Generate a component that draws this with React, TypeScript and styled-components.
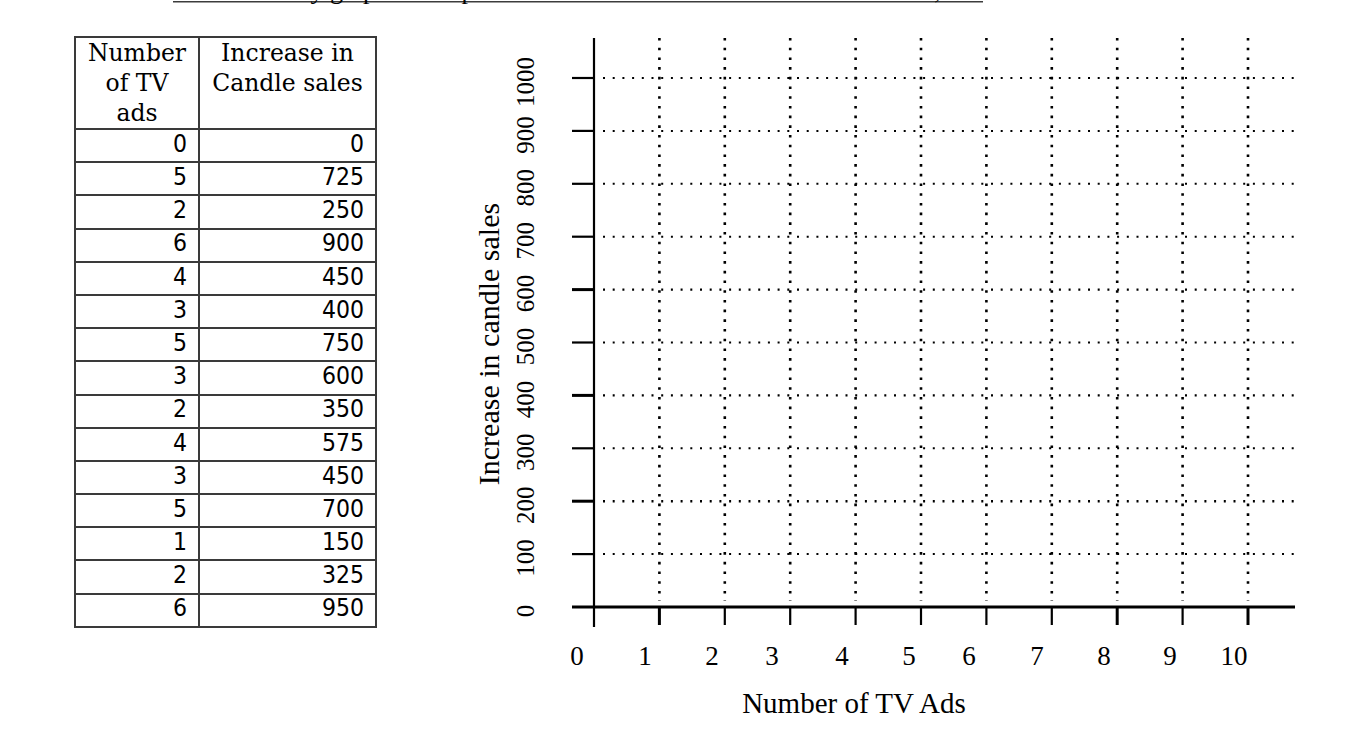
import React from "react";
import styled, { createGlobalStyle } from "styled-components";

const GlobalStyle = createGlobalStyle`
  html, body { margin: 0; padding: 0; background: #ffffff; }
  body { font-family: "Liberation Serif", "Times New Roman", serif; color: #000; }
`;

const Page = styled.div`
  width: 1345px;
  height: 730px;
  overflow: hidden;
  box-sizing: border-box;
  padding-left: 74px;
  display: flex;
  flex-direction: column;
`;

const Prompt = styled.div`
  margin-left: 99px;
  width: 810px;
  height: 6px;
  overflow: hidden;
  background: linear-gradient(#3c3c3c, #3c3c3c) 0 1px / 100% 1.5px no-repeat;
`;

const PromptText = styled.p`
  margin: -22px 0 0;
  font: 26px/26px "Liberation Serif", serif;
  white-space: nowrap;
  text-indent: -181px;
`;

const Content = styled.div`
  display: flex;
  align-items: flex-start;
  gap: 90px;
  margin-top: 30px;
`;

const DataTable = styled.table`
  border-collapse: collapse;
  table-layout: fixed;
  width: 301px;
  flex: none;
`;

const HeadCell = styled.th<{ $w: number }>`
  width: ${(p) => p.$w}px;
  height: 92px;
  box-sizing: border-box;
  border: 2px solid #3a3a3a;
  padding: 0 2px;
  font: 400 23.5px/30px "DejaVu Serif", serif;
  text-align: center;
  vertical-align: top;
`;

const Row = styled.tr`
  height: 33.2px;
`;

const Cell = styled.td`
  border: 2px solid #3a3a3a;
  padding: 0 11px 3px 0;
  font: 400 24.5px/1 "DejaVu Sans Condensed", "Open Sans", sans-serif;
  text-align: right;
  vertical-align: middle;
`;

const ChartSvg = styled.svg`
  display: block;
  flex: none;
  overflow: visible;
`;

const TickLabel = styled.text<{ $size: number }>`
  font-family: "Liberation Serif", serif;
  font-size: ${(p) => p.$size}px;
  fill: #000;
`;

const rows: [number, number][] = [
  [0, 0],
  [5, 725],
  [2, 250],
  [6, 900],
  [4, 450],
  [3, 400],
  [5, 750],
  [3, 600],
  [2, 350],
  [4, 575],
  [3, 450],
  [5, 700],
  [1, 150],
  [2, 325],
  [6, 950],
];

const X0 = 592;
const XSTEP = 65.4;
const Y0 = 607;
const YSTEP = 52.9;
const xs = Array.from({ length: 11 }, (_, i) => X0 + i * XSTEP);
const ys = Array.from({ length: 11 }, (_, i) => Y0 - i * YSTEP);
const xLabelCenters = [575, 643, 710, 770, 840, 907, 967, 1035, 1102, 1168, 1232];

function Chart() {
  return (
    <ChartSvg width={835} height={694} viewBox="465 36 835 694">
      {xs.slice(1).map((x, i) => (
        <line
          key={`vg${i}`}
          x1={x}
          y1={38}
          x2={x}
          y2={601}
          stroke="#000"
          strokeWidth={2.6}
          strokeDasharray="2.6 7.1"
        />
      ))}
      {ys.slice(1).map((y, i) => (
        <line
          key={`hg${i}`}
          x1={601}
          y1={y}
          x2={1293}
          y2={y}
          stroke="#000"
          strokeWidth={(i + 1) % 2 === 0 && i < 6 ? 2.4 : 2}
          strokeDasharray="2 7.7"
        />
      ))}
      {ys.slice(1).map((y, i) => (
        <line
          key={`yt${i}`}
          x1={570}
          y1={y}
          x2={592}
          y2={y}
          stroke="#000"
          strokeWidth={(i + 1) % 2 === 0 && i < 6 ? 3 : 2.2}
        />
      ))}
      {xs.slice(1).map((x, i) => (
        <line
          key={`xt${i}`}
          x1={x}
          y1={607}
          x2={x}
          y2={625}
          stroke="#000"
          strokeWidth={i === 0 || i === 7 || i === 9 ? 3 : 2.2}
        />
      ))}
      <line x1={592} y1={38} x2={592} y2={627} stroke="#000" strokeWidth={2.2} />
      <line x1={570} y1={607} x2={1293} y2={607} stroke="#000" strokeWidth={3} />

      {ys.map((y, i) => (
        <TickLabel
          key={`yl${i}`}
          $size={25}
          x={532}
          y={y + 4}
          textAnchor="middle"
          transform={`rotate(-90 532 ${y + 4})`}
        >
          {i * 100}
        </TickLabel>
      ))}
      <TickLabel
        $size={30}
        x={497}
        y={344}
        textAnchor="middle"
        transform="rotate(-90 497 344)"
      >
        Increase in candle sales
      </TickLabel>

      {xLabelCenters.map((x, i) => (
        <TickLabel key={`xl${i}`} $size={27} x={x} y={665} textAnchor="middle">
          {i}
        </TickLabel>
      ))}
      <TickLabel $size={29} x={852} y={713} textAnchor="middle">
        Number of TV Ads
      </TickLabel>
    </ChartSvg>
  );
}

export default function App() {
  return (
    <>
      <GlobalStyle />
      <Page>
        <Prompt>
          <PromptText>
            Model the data shown above by graph. Then plot the dots from the table on the axes below, and label them clearly.
          </PromptText>
        </Prompt>
        <Content>
          <DataTable>
            <thead>
              <tr>
                <HeadCell $w={124}>
                  Number
                  <br />
                  of TV
                  <br />
                  ads
                </HeadCell>
                <HeadCell $w={177}>
                  Increase in
                  <br />
                  Candle sales
                </HeadCell>
              </tr>
            </thead>
            <tbody>
              {rows.map(([ads, sales], i) => (
                <Row key={i}>
                  <Cell>{ads}</Cell>
                  <Cell>{sales}</Cell>
                </Row>
              ))}
            </tbody>
          </DataTable>
          <Chart />
        </Content>
      </Page>
    </>
  );
}
